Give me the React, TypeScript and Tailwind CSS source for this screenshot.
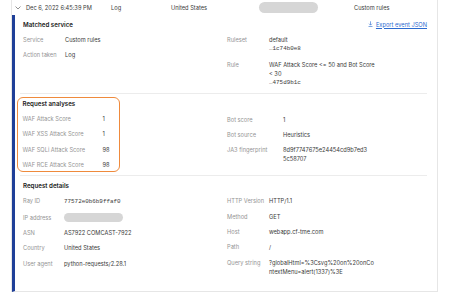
import React from "react";

const Label = ({ children, w }: { children: React.ReactNode; w: string }) => (
  <div className={`${w} shrink-0 text-[#949494]`}>{children}</div>
);

function Row({
  label,
  w,
  children,
}: {
  label: string;
  w: string;
  children: React.ReactNode;
}) {
  return (
    <div className="flex">
      <Label w={w}>{label}</Label>
      <div className="text-[#3a3a3a]">{children}</div>
    </div>
  );
}

const mono = "font-['Liberation_Mono',monospace] text-[5.9px]";

export default function App() {
  return (
    <div className="w-[474px] h-[292px] bg-white overflow-hidden font-['Inter',sans-serif] text-[5.7px] leading-[9px]">
      <div className="ml-[11px] w-[427px] h-[292px] border-x border-[#e6e6e6] flex flex-col">
        {/* top row */}
        <div className="h-[15px] flex items-center text-[#3a3a3a] shrink-0">
          <svg width="6" height="4" viewBox="0 0 6 4" className="ml-[3px]">
            <path d="M0.5 0.5 L3 3 L5.5 0.5" fill="none" stroke="#777" strokeWidth="0.8" />
          </svg>
          <div className="ml-[5px] w-[85px]">Dec 6, 2022 6:45:39 PM</div>
          <div className="w-[60px]">Log</div>
          <div className="w-[88px]">United States</div>
          <div className="w-[59px] h-[11px] rounded-full bg-[#d6d6d6]" />
          <div className="ml-[36px]">Custom rules</div>
        </div>

        {/* expanded */}
        <div className="flex-1 border-l-[3px] border-[#1f3f98] border-b border-b-[#e6e6e6] pl-[8px] pr-[10px]">
          {/* Matched service */}
          <div className="pt-[4px] pb-[6px]">
            <div className="flex items-center justify-between h-[10px]">
              <div className="font-semibold text-[6.2px] text-[#222]">Matched service</div>
              <div className="flex items-center gap-[3px] text-[#2c6bd0] underline">
                <svg width="5" height="6" viewBox="0 0 5 6">
                  <path d="M2.5 0.3 V4 M1 2.7 L2.5 4.2 L4 2.7 M0.5 5.5 H4.5" fill="none" stroke="#2c6bd0" strokeWidth="0.6" />
                </svg>
                <span>Export event JSON</span>
              </div>
            </div>
            <div className="grid grid-cols-[204px_1fr] mt-[6px]">
              <div className="flex flex-col gap-[6px]">
                <Row label="Service" w="w-[42px]">Custom rules</Row>
                <Row label="Action taken" w="w-[42px]">Log</Row>
              </div>
              <div className="flex flex-col gap-[7px]">
                <Row label="Ruleset" w="w-[42px]">
                  <div>default</div>
                  <div className={mono}>…1c74b0e8</div>
                </Row>
                <Row label="Rule" w="w-[42px]">
                  <div className="w-[110px]">WAF Attack Score &lt;= 50 and Bot Score &lt; 30</div>
                  <div className={mono}>…475d9b1c</div>
                </Row>
              </div>
            </div>
          </div>
          <div className="h-px bg-[#ececec] -ml-[3px]" />

          {/* Request analyses */}
          <div className="grid grid-cols-[204px_1fr] pt-[3px] pb-[3px]">
            <div className="-ml-[6px] w-[103px] border-[1.5px] border-[#ef8a3c] rounded-[6px] pl-[4.5px] pt-[0.5px] pb-[2px]">
              <div className="h-[10px] flex items-center font-semibold text-[6.2px] text-[#222]">
                Request analyses
              </div>
              <div className="flex flex-col gap-[6.3px] mt-[5.5px]">
                <Row label="WAF Attack Score" w="w-[80px]">1</Row>
                <Row label="WAF XSS Attack Score" w="w-[80px]">1</Row>
                <Row label="WAF SQLi Attack Score" w="w-[80px]">98</Row>
                <Row label="WAF RCE Attack Score" w="w-[80px]">98</Row>
              </div>
            </div>
            <div className="flex flex-col gap-[6.3px] pt-[17.5px]">
              <Row label="Bot score" w="w-[56px]">1</Row>
              <Row label="Bot source" w="w-[56px]">Heuristics</Row>
              <Row label="JA3 fingerprint" w="w-[56px]">
                <div>8d9f7747675e24454cd9b7ed3</div>
                <div>5c58707</div>
              </Row>
            </div>
          </div>
          <div className="h-px bg-[#ececec] -ml-[3px]" />

          {/* Request details */}
          <div className="pt-[5px]">
            <div className="h-[10px] flex items-center font-semibold text-[6.2px] text-[#222]">
              Request details
            </div>
            <div className="grid grid-cols-[204px_1fr] mt-[5.5px]">
              <div className="flex flex-col gap-[6.3px]">
                <Row label="Ray ID" w="w-[41px]">
                  <span className={mono}>77572e0b6b9ffaf0</span>
                </Row>
                <div className="flex items-center">
                  <Label w="w-[41px]">IP address</Label>
                  <div className="w-[59px] h-[9px] rounded-full bg-[#d6d6d6]" />
                </div>
                <Row label="ASN" w="w-[41px]">AS7922 COMCAST-7922</Row>
                <Row label="Country" w="w-[41px]">United States</Row>
                <Row label="User agent" w="w-[41px]">python-requests/2.28.1</Row>
              </div>
              <div className="flex flex-col gap-[6.3px]">
                <Row label="HTTP Version" w="w-[42px]">HTTP/1.1</Row>
                <Row label="Method" w="w-[42px]">GET</Row>
                <Row label="Host" w="w-[42px]">webapp.cf-tme.com</Row>
                <Row label="Path" w="w-[42px]">/</Row>
                <Row label="Query string" w="w-[42px]">
                  <div>?globalHtml=%3Csvg%20on%20onCo</div>
                  <div>ntextMenu=alert(1337)%3E</div>
                </Row>
              </div>
            </div>
          </div>
        </div>
      </div>
    </div>
  );
}
